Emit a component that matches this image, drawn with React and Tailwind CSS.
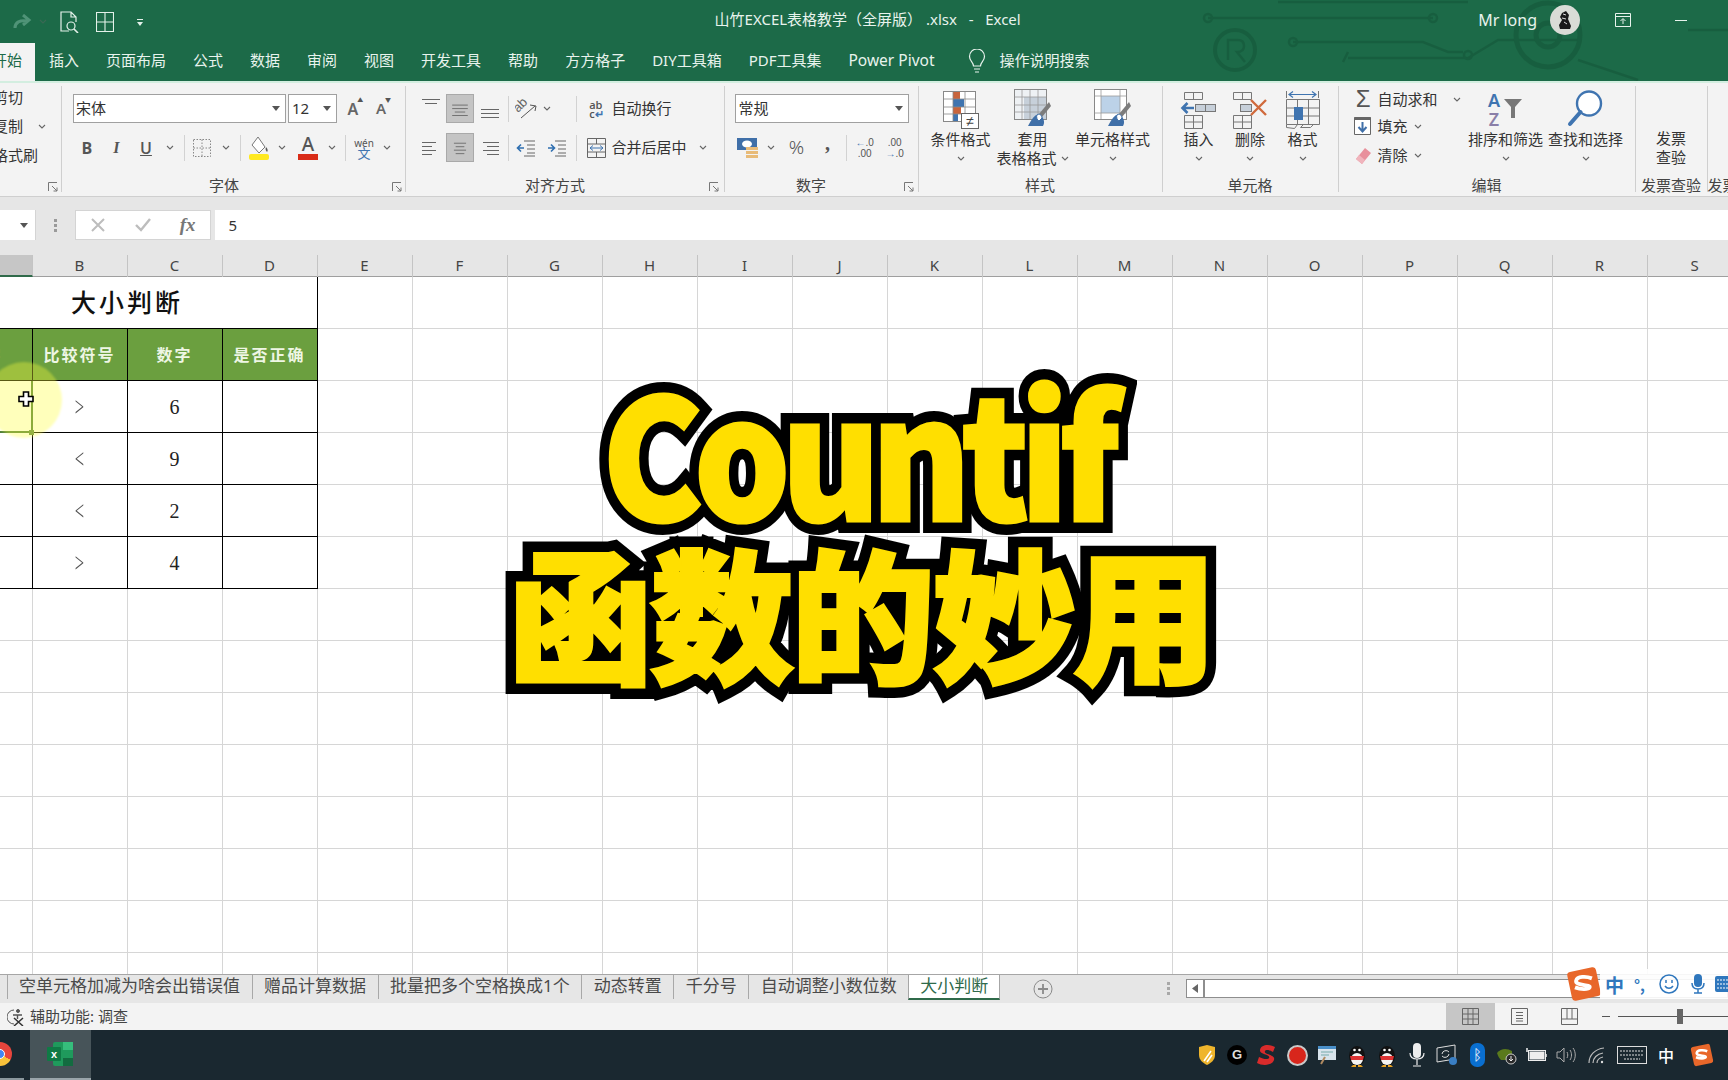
import React from 'react';

const uiFont = "font-['Noto_Sans','Noto_Sans_CJK_SC',sans-serif]";
const cjk = "font-['Noto_Sans_CJK_SC',sans-serif]";

const Chev = ({ className = '' }) => (
  <svg width="8" height="5" viewBox="0 0 8 5" className={`shrink-0 ${className}`} fill="none" stroke="#666" strokeWidth="1.1"><path d="M1 1l3 3 3-3" /></svg>
);

const Caret = () => (
  <svg width="8" height="5" viewBox="0 0 8 5" className="shrink-0"><path d="M0 0h8L4 5z" fill="#555" /></svg>
);

const Slot = ({ w, children, className = '' }) => (
  <div className={`flex items-center justify-center shrink-0 h-full ${w} ${className}`}>{children}</div>
);

const Sep = ({ className = '' }) => <div className={`w-px h-[26px] bg-[#d2d2d2] shrink-0 ${className}`} />;

const Launcher = ({ className }) => (
  <svg width="10" height="10" viewBox="0 0 10 10" className={`absolute top-[96px] ${className}`} fill="none" stroke="#777"><path d="M.5 9V.5H9M4 4l5 5M9 5.5V9H5.5" /></svg>
);

// ribbon group: fixed width, content on top, caption under it
const Group = ({ w, label, children, launcher }) => (
  <section className={`relative shrink-0 h-[106px] border-r border-[#cfcfcf] ${w}`}>
    <div className="h-[89px]">{children}</div>
    <div className={`h-[20px] leading-[20px] text-center text-[15px] text-[#444] whitespace-nowrap ${launcher ? 'pr-[20px]' : ''}`}>{label}</div>
    {launcher && <Launcher className={launcher} />}
  </section>
);

const Lines = ({ kind }) => {
  const rows = {
    top: [[6, 24, 4], [9, 21, 8]],
    mid: [[6, 24, 9], [6, 24, 13], [9, 21, 17], [6, 24, 21]],
    bot: [[6, 24, 14], [6, 24, 18], [6, 24, 22]],
    left: [[6, 20, 8], [6, 16, 12], [6, 20, 16], [6, 16, 20]],
    center: [[8, 22, 8], [10, 20, 12], [8, 22, 16], [10, 20, 20]],
    right: [[8, 24, 8], [12, 24, 12], [8, 24, 16], [12, 24, 20]],
  }[kind];
  return (
    <svg width="30" height="28" viewBox="0 0 30 28" stroke="#666" strokeWidth="1">
      {rows.map(([a, b, y]) => <path key={y} d={`M${a} ${y + 0.5}H${b}`} />)}
    </svg>
  );
};

const Selected = ({ children }) => <div className="bg-[#c4c4c4] border border-[#a9a9a9] w-[28px] h-[29px] flex items-center justify-center shrink-0">{children}</div>;

const Indent = ({ flip }) => (
  <svg width="20" height="18" viewBox="0 0 20 18" fill="none">
    <path d="M8 2h11M11 6h8M11 10h8M11 14h8M8 17h11" stroke="#666" />
    <path d={flip ? 'M1 9h6M4 5.5L7.5 9 4 12.5' : 'M8 9H2M5 5.5L1.5 9 5 12.5'} stroke="#2f6fb0" strokeWidth="1.6" />
  </svg>
);

const CondIcon = () => (
  <svg width="38" height="40" viewBox="0 0 38 40" fill="none">
    <rect x="1.5" y="1.5" width="32" height="30" fill="#fff" stroke="#888" />
    <rect x="11" y="2" width="7" height="7" fill="#c8643c" />
    <rect x="11" y="9" width="11" height="8" fill="#3f74b0" />
    <rect x="11" y="17" width="8" height="7" fill="#c8643c" />
    <rect x="11" y="24" width="5" height="7" fill="#3f74b0" />
    <path d="M1.5 9h32M1.5 17h32M1.5 24h32M11 2v29M23 2v29" stroke="#888" strokeWidth=".8" />
    <rect x="19.5" y="23.5" width="17" height="15" fill="#fff" stroke="#666" />
    <text x="28" y="36" textAnchor="middle" fontSize="14" fill="#444" fontFamily="Liberation Sans">≠</text>
  </svg>
);

const Brush = () => (
  <g>
    <path d="M36 14L26 26l3 3 9-11z" fill="#7c7c7c" />
    <path d="M26 26c-5 1-7 5-11 12h15c2-3 1-7-1-9z" fill="#3f6fa8" />
    <path d="M24 27c2-2 5 0 5 3l-3 3c-2-1-3-4-2-6z" fill="#fff" stroke="#3f6fa8" />
  </g>
);

const TableStyleIcon = () => (
  <svg width="40" height="42" viewBox="0 0 40 42" fill="none">
    <rect x="1.5" y="1.5" width="32" height="30" fill="#eef1f4" stroke="#888" />
    <rect x="11" y="9" width="22" height="22" fill="#c7d0da" />
    <path d="M1.5 9h32M1.5 17h32M1.5 24h32M9 2v29M17 2v29M25 2v29" stroke="#999" strokeWidth=".8" />
    <Brush />
  </svg>
);

const CellStyleIcon = () => (
  <svg width="40" height="42" viewBox="0 0 40 42" fill="none">
    <rect x="1.5" y="1.5" width="32" height="30" fill="#fff" stroke="#888" />
    <rect x="8" y="8" width="19" height="17" fill="#bcd2e8" />
    <path d="M1.5 8h32M1.5 25h32M8 2v29M27 2v29" stroke="#999" strokeWidth=".8" />
    <Brush />
  </svg>
);

const InsertIcon = () => (
  <svg width="38" height="40" viewBox="0 0 38 40" fill="none" stroke="#777">
    <path d="M4.5 2.500h18v7h-18zM13.500 2.500v7M4.500 25.500h18v13h-18zM4.500 32h18M13.500 25.500v13" />
    <rect x="15.500" y="14.500" width="20" height="7" fill="#c7d0da" />
    <path d="M25.500 14.500v7" />
    <path d="M14 18H3M7.500 13L2.500 18l5 5" stroke="#3f74b0" strokeWidth="2.600" />
  </svg>
);

const DeleteIcon = () => (
  <svg width="38" height="40" viewBox="0 0 38 40" fill="none" stroke="#777">
    <path d="M2.500 2.500h18v7h-18zM11.500 2.500v7M2.500 25.500h18v13h-18zM2.500 32h18M11.500 25.500v13" />
    <rect x="9.500" y="14.500" width="11" height="7" fill="#c7d0da" />
    <path d="M20 10l15 15M35 10L20 25" stroke="#d06a3c" strokeWidth="2.400" />
  </svg>
);

const FormatIcon = () => (
  <svg width="36" height="40" viewBox="0 0 36 40" fill="none" stroke="#777">
    <path d="M1.500 1v7M33.500 1v7" />
    <path d="M4 4.500h27M8 1.500L4 4.500l4 3M27 1.500l4 3-4 3" stroke="#3f74b0" strokeWidth="1.200" />
    <path d="M1.500 9.500h33v25h-33zM12.500 9.500v25M23.500 9.500v25M1.500 18h33M1.500 26h33" />
    <rect x="9" y="17" width="9" height="13" fill="#3f74b0" stroke="none" />
    <path d="M1.500 34.500v3l8 1 3-4h6l-3 3h10l3-3" />
  </svg>
);

const SortIcon = () => (
  <svg width="38" height="40" viewBox="0 0 38 40" fill="none">
    <text x="7" y="17" textAnchor="middle" fontSize="18" fill="#3f74b0" fontFamily="Noto Sans" fontWeight="600">A</text>
    <text x="7" y="36" textAnchor="middle" fontSize="18" fill="#8a7fa8" fontFamily="Noto Sans" fontWeight="600">Z</text>
    <path d="M17 9h18l-7 8v11h-4V17z" fill="#777" />
  </svg>
);

const FindIcon = () => (
  <svg width="38" height="42" viewBox="0 0 38 42" fill="none">
    <circle cx="22" cy="15.500" r="12" stroke="#3f74b0" strokeWidth="2.400" fill="#fff" />
    <path d="M13.500 24L3 36" stroke="#3f74b0" strokeWidth="4" strokeLinecap="round" />
  </svg>
);

const BigButton = ({ w, icon, line1, line2, chevAfter }) => (
  <div className={`flex flex-col items-center shrink-0 ${w}`}>
    <div className="h-[41px] mt-[3px] flex items-end justify-center">{icon}</div>
    <div className="leading-[19px] whitespace-nowrap text-[15px] text-[#333]">{line1}</div>
    <div className="h-[19px] flex items-center gap-[4px] whitespace-nowrap text-[15px] text-[#333] leading-[19px]">
      {line2}
      {(chevAfter || !line2) && <Chev />}
    </div>
  </div>
);

const COLS = ['A', 'B', 'C', 'D', 'E', 'F', 'G', 'H', 'I', 'J', 'K', 'L', 'M', 'N', 'O', 'P', 'Q', 'R', 'S', 'T'];
const gridCols = 'grid grid-cols-[repeat(20,95px)]';
const tableRows = [['5', '>', '6'], ['8', '<', '9'], ['1', '<', '2'], ['7', '>', '4']];
const sheetTabs = ['空单元格加减为啥会出错误值', '赠品计算数据', '批量把多个空格换成1个', '动态转置', '千分号', '自动调整小数位数'];
const blank = 'border-r border-b border-[#d6d6d6]';
const boxed = 'border-r-[1.5px] border-b-[1.5px] border-black';

const Sheet = () => (
  <div className="relative h-[697px] overflow-hidden bg-white">
    <div className={`${gridCols} auto-rows-[52px] ml-[-62.500px] w-max`}>
      <div className="col-span-4 border-r-[1.5px] border-b-[1.5px] border-black flex items-center justify-center text-[25px] tracking-[3px] font-medium text-[#111]">大小判断</div>
      {COLS.slice(4).map((c) => <div key={c} className={blank} />)}
      {['数字', '比较符号', '数字', '是否正确'].map((t, i) => (
        <div key={i} className={`${boxed} bg-[#6b9f3f] text-[#eef6e4] text-[16px] font-bold tracking-[2px] flex items-center justify-center`}>{t}</div>
      ))}
      {COLS.slice(4).map((c) => <div key={c} className={blank} />)}
      {tableRows.map((row) => (
        <React.Fragment key={row.join()}>
          {row.map((v, i) => (
            <div key={i} className={`${boxed} flex items-center justify-center font-['Liberation_Serif',serif] text-[20px] ${i === 1 ? 'text-[#555]' : 'text-[#222]'}`}>
              <span className={i === 1 ? 'text-[23px] font-light scale-x-[.72] scale-y-[1.15] mt-[4px]' : 'mt-[1px]'}>{v}</span>
            </div>
          ))}
          <div className={boxed} />
          {COLS.slice(4).map((c) => <div key={c} className={blank} />)}
        </React.Fragment>
      ))}
      {Array.from({ length: 8 }).flatMap((_, r) => COLS.map((c) => <div key={`${r}${c}`} className={blank} />))}
    </div>

    {/* selected cell edge and fill handle */}
    <div className="absolute left-0 top-[104px] w-[33px] h-[52px] border-r-2 border-b-2 border-[#4f7f3a]" />
    <div className="absolute left-[29px] top-[153px] w-[5px] h-[5px] bg-[#5f8a45]" />
    {/* cursor highlight */}
    <div className="absolute left-[-14px] top-[85px] w-[76px] h-[76px] rounded-full bg-[#ffff3c]/35 blur-[1px]" />
    <svg width="16" height="16" viewBox="0 0 16 16" className="absolute left-[18px] top-[114px]">
      <path d="M5.500 1h5v4.500H15v5h-4.500V15h-5v-4.500H1v-5h4.500z" fill="#fff" stroke="#000" strokeWidth="1.600" />
    </svg>

    {/* video title overlay */}
    <div className="absolute left-[504px] top-[92px] w-[716px] flex flex-col items-center">
      <div data-text="Countif" className={`relative ml-[-10px] scale-x-[.9] ${cjk} font-black text-[168px] leading-[158px] tracking-[-10px] text-[#ffdf00] [-webkit-text-stroke:24px_#000] [paint-order:stroke_fill] whitespace-nowrap after:absolute after:inset-0 after:content-[attr(data-text)] after:[-webkit-text-stroke:3px_#ffdf00]`}>Countif</div>
      <div data-text="函数的妙用" className={`relative ${cjk} font-black text-[143px] leading-[166px] tracking-[-2px] text-[#ffdf00] [-webkit-text-stroke:25px_#000] [paint-order:stroke_fill] whitespace-nowrap after:absolute after:inset-0 after:content-[attr(data-text)] after:[-webkit-text-stroke:4px_#ffdf00]`}>函数的妙用</div>
    </div>
  </div>
);

const TrayS = () => (
  <svg width="22" height="24" viewBox="0 0 22 24"><path d="M19 4C14 1 5 1 4 7c-1 5 11 4 9 8-1 2-6 1-10-1l-2 6c5 3 15 3 17-3 2-6-11-5-9-9 1-2 5-1 8 1z" fill="#d92b2b" /></svg>
);

const Qq = () => (
  <svg width="20" height="24" viewBox="0 0 20 24">
    <ellipse cx="10" cy="13" rx="8" ry="10" fill="#111" />
    <ellipse cx="10" cy="16" rx="6" ry="6" fill="#f4f4f4" />
    <path d="M3 13h14l-1 4H4z" fill="#d33" />
    <path d="M6 22h3v2H4zM11 22h3l2 2h-5z" fill="#e8a020" />
    <circle cx="7.500" cy="7" r="1.300" fill="#fff" />
    <circle cx="12.500" cy="7" r="1.300" fill="#fff" />
  </svg>
);

const Sogou = ({ size, className = '' }) => (
  <svg width={size} height={size} viewBox="0 0 32 32" className={className}>
    <rect x="3" y="3" width="26" height="26" rx="3" fill="#e8672a" transform="rotate(-12 16 16)" />
    <path d="M23 11c-5-2-13-2-14 2-1 5 13 3 12 6-1 2-8 2-13 0" fill="none" stroke="#fff" strokeWidth="3.400" />
  </svg>
);

export default function App() {
  return (
    <div className={`relative w-[1728px] h-[1080px] overflow-hidden ${uiFont} bg-white`}>
      {/* title bar and tabs */}
      <header className="relative h-[81px] bg-[#1c6a48] text-[#e8f3ed] text-[15px] overflow-hidden">
        <svg width="600" height="81" viewBox="0 0 600 81" className="absolute right-0 top-0 opacity-80" fill="none" stroke="#175c3d" strokeWidth="2.500">
          <path d="M80 18h225M150 2h190" />
          <circle cx="80" cy="18" r="4" />
          <circle cx="305" cy="18" r="4" />
          <circle cx="107" cy="50" r="20" strokeWidth="4" />
          <path d="M100 60V40h10q6 0 6 6t-7 6l8 10" />
          <path d="M165 42h130l25 10h15M215 62l5-10M220 58h120l30-18h80M560 30h40" />
          <circle cx="165" cy="42" r="4" />
          <circle cx="340" cy="55" r="4" />
          <circle cx="420" cy="35" r="32" strokeWidth="5" />
          <circle cx="420" cy="35" r="12" strokeWidth="5" />
          <path d="M450 60l60 20" />
        </svg>
        <div className="relative flex items-center h-[43px]">
          <div className="flex items-center w-[714.600px] h-full shrink-0">
            <Slot w="w-[36px] ml-[4px]">
              <svg width="20" height="16" viewBox="0 0 20 16" fill="none" stroke="#4f9377" strokeWidth="3"><path d="M3 14c0-6 5-8 12-7M11 1l6 5-6 5" /></svg>
            </Slot>
            <Slot w="w-[6px]"><Chev className="opacity-40" /></Slot>
            <Slot w="w-[48px]">
              <svg width="20" height="22" viewBox="0 0 20 22" fill="none" stroke="#e4f1ea" strokeWidth="1.200"><path d="M9 20H1V1h10l5 5v5M11 1v5h5" /><circle cx="11" cy="15" r="4" /><path d="M14 18l4 4" strokeWidth="1.600" /></svg>
            </Slot>
            <Slot w="w-[21px]">
              <svg width="18" height="20" viewBox="0 0 18 20" fill="none" stroke="#e4f1ea" strokeWidth="1.100"><path d="M.5.500h17v19H.500zM9 .500v19M.5 10h17" /></svg>
            </Slot>
            <Slot w="w-[49px]">
              <svg width="8" height="8" viewBox="0 0 8 8" fill="#e4f1ea"><path d="M1 1h6v1H1zM1 4h6L4 8z" /></svg>
            </Slot>
          </div>
          <div className="whitespace-pre mb-[4px]">山竹EXCEL表格教学（全屏版） .xlsx   -   Excel</div>
          <div className="flex items-center ml-auto pr-[41px] mb-[3px]">
            <span className="whitespace-nowrap text-[16px]">Mr long</span>
            <svg width="30" height="30" viewBox="0 0 30 30" className="ml-[13px]">
              <circle cx="15" cy="15" r="15" fill="#d9dcd6" />
              <path d="M12 8l4-2 3 4-1 4 3 7-1 3H10l-1-4 3-5-2-3z" fill="#1a1a1a" />
              <path d="M13 9l3 1M12 13l4 1M14 17l3 2" stroke="#ddd" />
            </svg>
            <svg width="16" height="14" viewBox="0 0 16 14" fill="none" stroke="#e8f3ed" className="ml-[35px]"><path d="M.5.500h15v13H.500zM.5 3.500h15M8 11V6M5.500 8L8 5.500 10.500 8" /></svg>
            <div className="w-[12px] h-px bg-[#e8f3ed] ml-[44px]" />
          </div>
        </div>
        <nav className="relative flex items-center h-[38px] gap-[27px] whitespace-nowrap [&>span]:mb-[3px]">
          <div className="w-[35px] h-full bg-[#f3f3f3] text-[#1c6a48] flex items-center justify-end pr-[13px] pb-[3px] overflow-hidden shrink-0 mr-[-13px]"><span className="shrink-0">开始</span></div>
          {['插入', '页面布局', '公式', '数据', '审阅', '视图', '开发工具', '帮助', '方方格子', 'DIY工具箱', 'PDF工具集'].map((t) => <span key={t}>{t}</span>)}
          <span className="text-[15.500px]">Power Pivot</span>
          <span className="flex items-center gap-[14px] ml-[6px]">
            <svg width="18" height="24" viewBox="0 0 18 24" fill="none" stroke="#e8f3ed" strokeWidth="1.200"><path d="M5.500 17c0-4-4-5-4-9.500a7.500 7.500 0 0115 0C16.500 12 12.500 13 12.500 17zM6 20h6M7 23h4" /></svg>
            操作说明搜索
          </span>
        </nav>
      </header>

      {/* ribbon */}
      <div className="h-[116px] bg-[#f3f3f3] border-t-2 border-[#d3eee0] border-b border-b-[#cfcfcf] pt-[3px] text-[#333] text-[15px] flex overflow-hidden">
        <Group w="w-[62.400px]" launcher="left-[48px]">
          <div className="flex flex-col whitespace-nowrap mt-[-3px]">
            <div className="h-[29px] w-[23px] flex items-center justify-end">剪切</div>
            <div className="h-[29px] flex items-center"><span className="w-[23px] flex justify-end">复制</span><Chev className="ml-[15px]" /></div>
            <div className="h-[29px] w-[38px] flex items-center justify-end">格式刷</div>
          </div>
        </Group>

        <Group w="w-[344px]" label="字体" launcher="left-[330px]">
          <div className="pt-[8px] pl-[10.600px] flex flex-col gap-[10px]">
            <div className="flex items-center h-[29px]">
              <div className="w-[213px] h-full bg-white border border-[#a0a0a0] flex items-center justify-between pl-[2px] pr-[5px]">宋体<Caret /></div>
              <div className="w-[49px] h-full ml-[2px] bg-white border border-[#a0a0a0] flex items-center justify-between pl-[3px] pr-[5px]">12<Caret /></div>
              <Slot w="w-[26px] ml-[3px]">
                <span className="relative font-semibold text-[16px] text-[#666]">A<span className="absolute -right-[5px] top-[-1px] text-[6px] text-[#555]">▲</span></span>
              </Slot>
              <Slot w="w-[30px]">
                <span className="relative font-semibold text-[15px] text-[#666]">A<span className="absolute -right-[5px] top-[-1px] text-[6px] text-[#555]">▼</span></span>
              </Slot>
            </div>
            <div className="flex items-center h-[29px] text-[#555]">
              <Slot w="w-[28px]"><span className="font-bold text-[16px] font-['Open_Sans',sans-serif]">B</span></Slot>
              <Slot w="w-[31px]"><span className="italic font-bold text-[16px] font-['Liberation_Serif',serif]">I</span></Slot>
              <Slot w="w-[28px]"><span className="underline font-semibold text-[16px] font-['Open_Sans',sans-serif]">U</span></Slot>
              <Slot w="w-[20px]"><Chev /></Slot>
              <Sep className="ml-[4px]" />
              <Slot w="w-[34px]">
                <svg width="18" height="18" viewBox="0 0 18 18" fill="none" stroke="#888" strokeDasharray="1.500 1.500"><path d="M.5.500h17v17H.500zM9 .500v17M.5 9h17" /></svg>
              </Slot>
              <Slot w="w-[14px]"><Chev /></Slot>
              <Sep className="ml-[7px]" />
              <Slot w="w-[36px]">
                <svg width="22" height="24" viewBox="0 0 22 24" fill="none">
                  <path d="M10 1l7 10-6 6-7-8z" fill="#fff" stroke="#777" />
                  <path d="M18 11c2 2 2 4 1 5-1-1-2-3-1-5z" fill="#555" />
                  <rect x="1" y="18" width="20" height="6" rx="2" fill="#ffe920" />
                </svg>
              </Slot>
              <Slot w="w-[10px]"><Chev /></Slot>
              <Slot w="w-[42px]">
                <div className="flex flex-col items-center leading-[18px]">
                  <span className="text-[19px] font-medium text-[#555] h-[18px] mb-[1px]">A</span>
                  <span className="w-[20px] h-[6px] bg-[#d92b17]" />
                </div>
              </Slot>
              <Slot w="w-[6px]"><Chev /></Slot>
              <Sep className="ml-[10px]" />
              <Slot w="w-[36px]">
                <div className="flex flex-col items-center leading-[10px]">
                  <span className="text-[10px] text-[#555]">wén</span>
                  <span className="text-[13px] text-[#3f74b0]">文</span>
                </div>
              </Slot>
              <Slot w="w-[10px]"><Chev /></Slot>
            </div>
          </div>
        </Group>

        <Group w="w-[318.200px]" label="对齐方式" launcher="left-[303px]">
          <div className="pt-[8px] pl-[9px] flex flex-col gap-[10px]">
            <div className="flex items-center h-[29px]">
              <Slot w="w-[31px]"><Lines kind="top" /></Slot>
              <Selected><Lines kind="mid" /></Selected>
              <Slot w="w-[32px]"><Lines kind="bot" /></Slot>
              <Sep className="ml-[2px]" />
              <Slot w="w-[36px]">
                <svg width="24" height="22" viewBox="0 0 24 22" fill="none">
                  <text x="3" y="15" fontSize="13" fill="#666" fontFamily="Liberation Sans" transform="rotate(-45 3 15)">ab</text>
                  <path d="M6 20L20 8M15 7l6 1-1 5" stroke="#555" />
                </svg>
              </Slot>
              <Slot w="w-[4px]"><Chev /></Slot>
              <Sep className="ml-[27px]" />
              <div className="flex items-center h-full ml-[5px]">
                <Slot w="w-[28px]">
                  <div className="text-[11px] leading-[9px] text-[#555] font-['Open_Sans',sans-serif] font-semibold">ab<br />c<span className="text-[#3f74b0]">↵</span></div>
                </Slot>
                <span className="ml-[1px] whitespace-nowrap">自动换行</span>
              </div>
            </div>
            <div className="flex items-center h-[29px]">
              <Slot w="w-[31px]"><Lines kind="left" /></Slot>
              <Selected><Lines kind="center" /></Selected>
              <Slot w="w-[32px]"><Lines kind="right" /></Slot>
              <Sep className="ml-[2px]" />
              <Slot w="w-[34px]"><Indent /></Slot>
              <Slot w="w-[28px]"><Indent flip /></Slot>
              <Sep className="ml-[5px]" />
              <Slot w="w-[28px] ml-[5px]">
                <svg width="19" height="20" viewBox="0 0 19 20" fill="none" stroke="#666"><path d="M.5.500h18v19H.500zM.5 6h18M.5 14h18M9.500.500V6M9.500 14v6" /><path d="M3 10h13M6 7.500L3 10l3 2.500M13 7.500l3 2.500-3 2.500" stroke="#3f74b0" /></svg>
              </Slot>
              <span className="ml-[1px] whitespace-nowrap">合并后居中</span>
              <Slot w="w-[10px] ml-[12px]"><Chev /></Slot>
            </div>
          </div>
        </Group>

        <Group w="w-[194px]" label="数字" launcher="left-[179px]">
          <div className="pt-[8px] pl-[10px] flex flex-col gap-[10px]">
            <div className="w-[174px] h-[29px] bg-white border border-[#a0a0a0] flex items-center justify-between pl-[3px] pr-[5px]">常规<Caret /></div>
            <div className="flex items-center h-[29px] text-[#555]">
              <Slot w="w-[26px]">
                <svg width="22" height="22" viewBox="0 0 22 22"><rect x="0" y="1" width="20" height="12" fill="#3f6fa8" /><ellipse cx="10" cy="7" rx="5" ry="3.500" fill="#fff" /><rect x="9" y="10" width="12" height="3" fill="#e8bb78" /><rect x="9" y="14" width="12" height="3" fill="#e8bb78" /><rect x="9" y="18" width="12" height="3" fill="#e8bb78" /></svg>
              </Slot>
              <Slot w="w-[20px]"><Chev /></Slot>
              <Slot w="w-[32px]"><span className="text-[19px] font-light">%</span></Slot>
              <Slot w="w-[30px]"><span className="text-[20px] font-bold font-['Liberation_Serif',serif] leading-[14px] mb-[10px]">,</span></Slot>
              <Sep className="ml-[3px]" />
              <Slot w="w-[36px]">
                <div className="text-[10px] leading-[11px] text-center font-['Liberation_Sans',sans-serif]"><span className="text-[#3f74b0]">←</span>.0<br />.00</div>
              </Slot>
              <Slot w="w-[24px]">
                <div className="text-[10px] leading-[11px] text-center font-['Liberation_Sans',sans-serif]">.00<br /><span className="text-[#3f74b0]">→</span>.0</div>
              </Slot>
            </div>
          </div>
        </Group>

        <Group w="w-[244px]" label="样式">
          <div className="flex">
            <BigButton w="w-[84px]" icon={<CondIcon />} line1="条件格式" />
            <BigButton w="w-[60px]" icon={<TableStyleIcon />} line1="套用" line2="表格格式" chevAfter />
            <BigButton w="w-[100px]" icon={<CellStyleIcon />} line1="单元格样式" />
          </div>
        </Group>

        <Group w="w-[176px]" label="单元格">
          <div className="flex pl-[10px]">
            <BigButton w="w-[52px]" icon={<InsertIcon />} line1="插入" />
            <BigButton w="w-[51px]" icon={<DeleteIcon />} line1="删除" />
            <BigButton w="w-[54px]" icon={<FormatIcon />} line1="格式" />
          </div>
        </Group>

        <Group w="w-[297px]" label="编辑">
          <div className="flex">
            <div className="w-[131px] pl-[11px] shrink-0">
              <div className="flex items-center h-[26px]">
                <span className="w-[27px] text-[24px] leading-[24px] text-[#555] text-center font-['Liberation_Sans',sans-serif]">Σ</span>
                <span className="ml-[1px] whitespace-nowrap">自动求和</span>
                <Chev className="ml-[15px]" />
              </div>
              <div className="flex items-center h-[29px]">
                <span className="w-[27px] flex justify-center">
                  <svg width="18" height="19" viewBox="0 0 18 19" fill="#fff" stroke="#666"><path d="M.5.500h16v17H.500z" /><path d="M.5 1.500h16" strokeWidth="3" /><path d="M8.500 5v9M4.500 10l4 4.500 4-4.500" stroke="#3f6fa8" strokeWidth="2" fill="none" /></svg>
                </span>
                <span className="ml-[1px]">填充</span>
                <Chev className="ml-[6px]" />
              </div>
              <div className="flex items-center h-[29px]">
                <span className="w-[27px] flex justify-center">
                  <svg width="18" height="18" viewBox="0 0 18 18"><path d="M11 1l6 5-9 11-6-5z" fill="#e8909c" /><path d="M5 8l6 5-3 4-6-5z" fill="#f0b4bc" /></svg>
                </span>
                <span className="ml-[1px]">清除</span>
                <Chev className="ml-[6px]" />
              </div>
            </div>
            <BigButton w="w-[72px]" icon={<SortIcon />} line1="排序和筛选" />
            <BigButton w="w-[88px]" icon={<FindIcon />} line1="查找和选择" />
          </div>
        </Group>

        <Group w="w-[72px]" label="发票查验">
          <div className="flex flex-col items-center pt-[43px] leading-[19px]">
            <span>发票</span>
            <span>查验</span>
          </div>
        </Group>
        <Group w="w-[30px]" label="发票" />
      </div>

      {/* formula bar */}
      <div className="h-[43px] bg-[#e6e6e6] pt-[13px]">
        <div className="flex h-[30px]">
          <div className="w-[36px] bg-white border-r border-[#d4d4d4] flex items-center justify-end pr-[7px]"><Caret /></div>
          <div className="w-[38.600px] flex flex-col items-center justify-center gap-[2px]">
            <span className="w-[3px] h-[3px] bg-[#9a9a9a]" />
            <span className="w-[3px] h-[3px] bg-[#9a9a9a]" />
            <span className="w-[3px] h-[3px] bg-[#9a9a9a]" />
          </div>
          <div className="w-[136px] bg-white border border-[#d4d4d4] flex items-center text-[#bdbdbd]">
            <Slot w="w-[44px]"><svg width="14" height="14" viewBox="0 0 14 14" stroke="#bdbdbd" strokeWidth="2"><path d="M1 1l12 12M13 1L1 13" /></svg></Slot>
            <Slot w="w-[46px]"><svg width="16" height="14" viewBox="0 0 16 14" fill="none" stroke="#bdbdbd" strokeWidth="2.400"><path d="M1 7l5 5 9-11" /></svg></Slot>
            <Slot w="w-[44px]"><span className="font-['Liberation_Serif',serif] italic font-bold text-[19px] text-[#777]">fx</span></Slot>
          </div>
          <div className="flex-1 ml-[4px] bg-white flex items-center pl-[14px] text-[15px] text-[#333]">5</div>
        </div>
      </div>

      {/* column headers */}
      <div className="h-[37px] bg-[#e6e6e6] pt-[15px] overflow-hidden">
        <div className={`${gridCols} h-[22px] ml-[-62.500px] w-max border-b border-[#9f9f9f]`}>
          {COLS.map((c) => (
            <div key={c} className={`text-center text-[15px] leading-[20px] text-[#444] border-r border-[#c4c4c4] ${c === 'A' ? 'bg-[#c6c6c6] border-b-2 border-b-[#2f6a4a]' : ''}`}>{c}</div>
          ))}
        </div>
      </div>

      <Sheet />

      {/* sheet tabs */}
      <div className="h-[29px] bg-[#e6e6e6] border-t border-[#a6a6a6] flex items-start text-[17px] text-[#4a4a4a] whitespace-nowrap">
        <div className="w-[6.500px] shrink-0" />
        {sheetTabs.map((t) => (
          <div key={t} className="h-[24px] border-l border-[#a8a8a8] px-[11.500px] leading-[21px] shrink-0">{t}</div>
        ))}
        <div className="h-[25px] bg-white border-x border-[#a6a6a6] border-b-[2px] border-b-[#2f6a4a] px-[11px] leading-[21px] text-[#2f6a4a] shrink-0">大小判断</div>
        <svg width="20" height="20" viewBox="0 0 20 20" fill="none" stroke="#8a8a8a" className="ml-[33px] mt-[4px] shrink-0"><circle cx="10" cy="10" r="9" /><path d="M10 5v10M5 10h10" strokeWidth="1.800" /></svg>
        <div className="ml-[114px] mt-[7px] flex flex-col gap-[2px] shrink-0">
          <span className="w-[3px] h-[3px] bg-[#a8a8a8]" />
          <span className="w-[3px] h-[3px] bg-[#a8a8a8]" />
          <span className="w-[3px] h-[3px] bg-[#a8a8a8]" />
        </div>
        <div className="ml-[16px] mt-[4px] h-[19px] flex-1 bg-white border border-[#8e8e8e] flex items-center">
          <div className="w-[18px] h-full border-r-2 border-[#8e8e8e] flex items-center justify-center">
            <svg width="6" height="9" viewBox="0 0 6 9"><path d="M6 0v9L0 4.500z" fill="#666" /></svg>
          </div>
        </div>
      </div>

      {/* status bar */}
      <div className="h-[27px] bg-[#f3f3f3] flex items-center text-[15px] text-[#444] whitespace-nowrap">
        <svg width="18" height="18" viewBox="0 0 18 18" fill="none" stroke="#555" className="ml-[7px] shrink-0"><path d="M7 2a7 7 0 000 14" /><circle cx="11" cy="3" r="1.500" fill="#555" /><path d="M6 7h9M10.500 7v4" strokeWidth="1.400" /><path d="M7 10l9 8M16 10l-9 8" stroke="#333" strokeWidth="1.500" /></svg>
        <span className="ml-[5px]">辅助功能: 调查</span>
        <div className="ml-auto flex items-center h-full">
          <Slot w="w-[49px] bg-[#c6c6c6]">
            <svg width="17" height="17" viewBox="0 0 17 17" fill="none" stroke="#666"><path d="M.5.500h16v16H.500zM.5 6h16M.5 11h16M6 .500v16M11 .500v16" /></svg>
          </Slot>
          <Slot w="w-[49px]">
            <svg width="17" height="17" viewBox="0 0 17 17" fill="none" stroke="#666"><path d="M.5.500h16v16H.500zM5 4.500h7M5 7.500h7M5 10.500h7M5 13h7" /></svg>
          </Slot>
          <Slot w="w-[51px]">
            <svg width="17" height="17" viewBox="0 0 17 17" fill="none" stroke="#666"><path d="M.5.500h16v16H.500zM.5 11h16M6 .500V11M11 .500V11" /></svg>
          </Slot>
          <div className="w-[8px] h-px bg-[#555] ml-[7px]" />
          <div className="relative w-[110px] h-px bg-[#555] ml-[8px]">
            <span className="absolute left-[59px] top-[-7px] w-[6px] h-[15px] bg-[#666]" />
          </div>
        </div>
      </div>

      {/* taskbar */}
      <div className="h-[50px] bg-[#1a2830] flex items-center relative">
        <div className="w-[24px] h-full relative overflow-hidden shrink-0 border-b-2 border-[#8a979d]">
          <div className="absolute left-[-12px] top-[12px] w-[24px] h-[24px] rounded-full bg-[conic-gradient(#e8453c_0_33%,#f8c23a_33%_66%,#34a853_66%)] flex items-center justify-center">
            <span className="w-[10px] h-[10px] rounded-full bg-[#4285f4] border border-white" />
          </div>
        </div>
        <div className="w-[61px] h-full ml-[6px] bg-[#475459] border-b-2 border-[#9aa5aa] flex items-center justify-center shrink-0">
          <svg width="28" height="26" viewBox="0 0 28 26">
            <rect x="6" y="1" width="20" height="24" rx="2" fill="#1f9a5c" />
            <rect x="16" y="1" width="10" height="8" fill="#36bd7c" />
            <rect x="16" y="17" width="10" height="8" fill="#136b40" />
            <rect x="0" y="6" width="14" height="14" rx="1" fill="#0f7a45" />
            <text x="7" y="17" textAnchor="middle" fontSize="11" fontWeight="700" fill="#fff" fontFamily="Liberation Sans">x</text>
          </svg>
        </div>
        <div className="ml-auto flex items-center h-full pr-[12px]">
          <Slot w="w-[30px]"><svg width="18" height="22" viewBox="0 0 18 22"><path d="M1 3l8-2 8 2v8c0 5-4 8-8 10-4-2-8-5-8-10z" fill="#efb52c" /><path d="M6 17l7-10M9 18l5-7" stroke="#fff" strokeWidth="1.600" /></svg></Slot>
          <Slot w="w-[30px]"><div className="w-[20px] h-[20px] rounded-full bg-black flex items-center justify-center text-[#ddd] text-[13px] font-bold font-['Liberation_Sans',sans-serif]">G</div></Slot>
          <Slot w="w-[30px]"><TrayS /></Slot>
          <Slot w="w-[30px]"><div className="w-[21px] h-[21px] rounded-full border-2 border-[#c9c9c9] bg-[#d8261c]" /></Slot>
          <Slot w="w-[30px]"><svg width="20" height="20" viewBox="0 0 20 20" fill="none"><rect x="1" y="1" width="18" height="14" fill="#d8e4ec" /><rect x="1" y="1" width="18" height="3" fill="#4a8fc8" /><path d="M4 7h12M4 10h8" stroke="#7aa" /><path d="M8 12l-4 7" stroke="#b08a60" strokeWidth="2" /></svg></Slot>
          <Slot w="w-[30px]"><Qq /></Slot>
          <Slot w="w-[30px]"><Qq /></Slot>
          <Slot w="w-[30px]"><svg width="16" height="24" viewBox="0 0 16 24" fill="none"><rect x="4" y="0" width="8" height="15" rx="4" fill="#eee" /><path d="M1 10c0 4 3 6 7 6s7-2 7-6M8 16v6M4 23h8" stroke="#eee" strokeWidth="1.200" /></svg></Slot>
          <Slot w="w-[30px]"><svg width="22" height="22" viewBox="0 0 22 22" fill="none" stroke="#ddd"><path d="M1 4l18-3v14L1 18z" /><path d="M6 10a4 4 0 017-2M13 10a4 4 0 01-7 2" /><circle cx="17" cy="17" r="4" fill="#3a7fc4" stroke="none" /></svg></Slot>
          <Slot w="w-[30px]"><div className="w-[15px] h-[24px] rounded-[7px] bg-[#0a6fd0] text-white text-[15px] leading-[24px] text-center font-['Liberation_Sans',sans-serif]">ᛒ</div></Slot>
          <Slot w="w-[30px]"><svg width="22" height="20" viewBox="0 0 22 20"><path d="M1 8c4-5 10-5 15-2v9H5C3 13 2 11 1 8z" fill="#5a7a1c" /><circle cx="15" cy="14" r="5" fill="#2a2a2a" stroke="#ccc" /><path d="M15 11v5M13 14l2 2 2-2" stroke="#eee" fill="none" /></svg></Slot>
          <Slot w="w-[30px]"><svg width="22" height="14" viewBox="0 0 22 14" fill="none" stroke="#eee"><rect x="2.500" y="2.500" width="17" height="10" /><rect x="4" y="4" width="14" height="7" fill="#eee" /><path d="M20 6v3M1 0v4" strokeWidth="1.500" /></svg></Slot>
          <Slot w="w-[30px]"><svg width="22" height="16" viewBox="0 0 22 16" fill="none" stroke="#aaa"><path d="M1 5h3l4-4v14l-4-4H1zM11 5c1 2 1 4 0 6M14 3c2 3 2 7 0 10M17 1c3 4 3 10 0 14" /></svg></Slot>
          <Slot w="w-[30px]"><svg width="18" height="17" viewBox="0 0 18 17" fill="none" stroke="#bbb" strokeWidth="1.200"><path d="M1 16C1 8 7 2 16 1M5 16c0-5 4-9 10-10M9 16c0-3 2-5 6-6" /><circle cx="14" cy="15" r="1.200" fill="#ddd" stroke="none" /></svg></Slot>
          <Slot w="w-[40px]"><svg width="30" height="18" viewBox="0 0 30 18" fill="none" stroke="#ddd"><rect x=".5" y=".5" width="29" height="17" /><path d="M3 5h24M3 9h24M7 13h16" strokeDasharray="2 1" /></svg></Slot>
          <Slot w="w-[28px]"><span className={`${cjk} text-white text-[16px] font-medium`}>中</span></Slot>
          <Slot w="w-[28px] ml-[8px]"><Sogou size={24} /></Slot>
        </div>
      </div>

      {/* floating IME bar */}
      <div className="absolute left-[1566px] top-[966px] w-[162px] h-[36px] flex items-center">
        <Sogou size={36} className="shrink-0" />
        <div className={`h-[30px] flex-1 ml-[-2px] bg-white/90 flex items-center gap-[10px] pl-[5px] text-[#2f77bd] ${cjk} font-bold`}>
          <span className="text-[19px] leading-none">中</span>
          <span className="text-[15px] leading-none whitespace-nowrap">°,</span>
          <svg width="20" height="20" viewBox="0 0 20 20" fill="none" stroke="#2f77bd" strokeWidth="1.500" className="shrink-0 ml-[4px]"><circle cx="10" cy="10" r="9" /><path d="M6 12c2 3 6 3 8 0" /><path d="M7 6v3M13 6v3" /></svg>
          <svg width="14" height="20" viewBox="0 0 14 20" fill="#2f77bd" className="shrink-0 ml-[2px]"><rect x="3" y="0" width="8" height="13" rx="4" /><path d="M1 9c0 4 2 6 6 6s6-2 6-6M7 15v4M3 19h8" fill="none" stroke="#2f77bd" strokeWidth="1.500" /></svg>
          <svg width="18" height="16" viewBox="0 0 18 16" className="shrink-0"><rect width="18" height="16" rx="2" fill="#2f77bd" /><path d="M2 4h14M2 8h14M2 12h14" stroke="#fff" strokeDasharray="2 1" /></svg>
        </div>
      </div>
    </div>
  );
}
